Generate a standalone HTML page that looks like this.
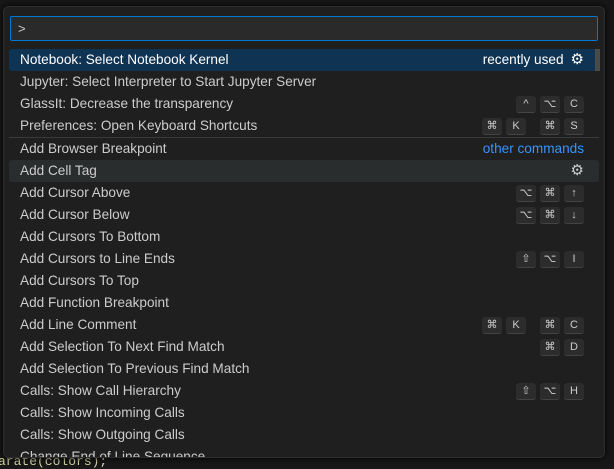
<!DOCTYPE html>
<html><head><style>
body{margin:0;width:614px;height:466px;background:#181818;overflow:hidden;position:relative;font-family:"Liberation Sans",sans-serif;}
.code{position:absolute;left:-2px;top:454px;font:13px "Liberation Mono",monospace;color:#dcdcaa;}
.pal{position:absolute;left:3px;top:6px;width:600px;height:450px;background:#1f1f1f;border:1px solid #2e2e2e;border-radius:6px;box-shadow:0 0 8px #000;overflow:hidden;}
.inp{position:absolute;left:6px;top:9px;background:#2a2a2a;border:1px solid #0078d4;border-radius:2px;color:#ccc;font-size:13px;line-height:23px;padding-left:7px;box-sizing:border-box;width:588px;height:25px;}
.row{position:absolute;left:5px;width:590px;height:22px;line-height:22px;color:#cccccc;font-size:13.6px;padding-left:11px;box-sizing:border-box;border-radius:3px;}
.sel{background:#0f3352;color:#fff;}
.hov{background:#2a2d2e;}
.r{position:absolute;right:15px;top:0;height:22px;display:flex;align-items:center;gap:4px;}
.k{display:inline-block;min-width:20px;height:17px;line-height:17px;text-align:center;background:#2c2c2c;border-bottom:1px solid #444;border-radius:3px;font-size:11px;color:#ccc;box-sizing:border-box;}
.gap{width:6px}
.sep{position:absolute;left:5px;width:590px;top:130px;height:1px;background:#3a3a3a;}
.blue{color:#3794ff;}
.sb{position:absolute;left:591px;top:42px;width:5px;height:22px;background:#4a4a4a;}
.g{font-size:15px;font-weight:normal;color:#ccc}
</style></head><body>
<div class="code">arate(colors);</div>
<div class="pal">
<div class="inp">&gt;</div>
<div class="row sel" style="top:42px">Notebook: Select Notebook Kernel<span class="r">recently used <span class="g" style="margin-left:3px;color:#fff">⚙</span></span></div>
<div class="sb"></div>
<div class="row" style="top:64px">Jupyter: Select Interpreter to Start Jupyter Server</div>
<div class="row" style="top:86px">GlassIt: Decrease the transparency<span class="r"><span class="k">^</span><span class="k">⌥</span><span class="k">C</span></span></div>
<div class="row" style="top:108px">Preferences: Open Keyboard Shortcuts<span class="r"><span class="k">⌘</span><span class="k">K</span><span class="gap"></span><span class="k">⌘</span><span class="k">S</span></span></div>
<div class="sep"></div>
<div class="row" style="top:131px">Add Browser Breakpoint<span class="r blue">other commands</span></div>
<div class="row hov" style="top:153px">Add Cell Tag<span class="r"><span class="g">⚙</span></span></div>
<div class="row" style="top:175px">Add Cursor Above<span class="r"><span class="k">⌥</span><span class="k">⌘</span><span class="k">↑</span></span></div>
<div class="row" style="top:197px">Add Cursor Below<span class="r"><span class="k">⌥</span><span class="k">⌘</span><span class="k">↓</span></span></div>
<div class="row" style="top:219px">Add Cursors To Bottom</div>
<div class="row" style="top:241px">Add Cursors to Line Ends<span class="r"><span class="k">⇧</span><span class="k">⌥</span><span class="k">I</span></span></div>
<div class="row" style="top:263px">Add Cursors To Top</div>
<div class="row" style="top:285px">Add Function Breakpoint</div>
<div class="row" style="top:307px">Add Line Comment<span class="r"><span class="k">⌘</span><span class="k">K</span><span class="gap"></span><span class="k">⌘</span><span class="k">C</span></span></div>
<div class="row" style="top:329px">Add Selection To Next Find Match<span class="r"><span class="k">⌘</span><span class="k">D</span></span></div>
<div class="row" style="top:351px">Add Selection To Previous Find Match</div>
<div class="row" style="top:373px">Calls: Show Call Hierarchy<span class="r"><span class="k">⇧</span><span class="k">⌥</span><span class="k">H</span></span></div>
<div class="row" style="top:395px">Calls: Show Incoming Calls</div>
<div class="row" style="top:417px">Calls: Show Outgoing Calls</div>
<div class="row" style="top:439px">Change End of Line Sequence</div>
</div>
</body></html>
